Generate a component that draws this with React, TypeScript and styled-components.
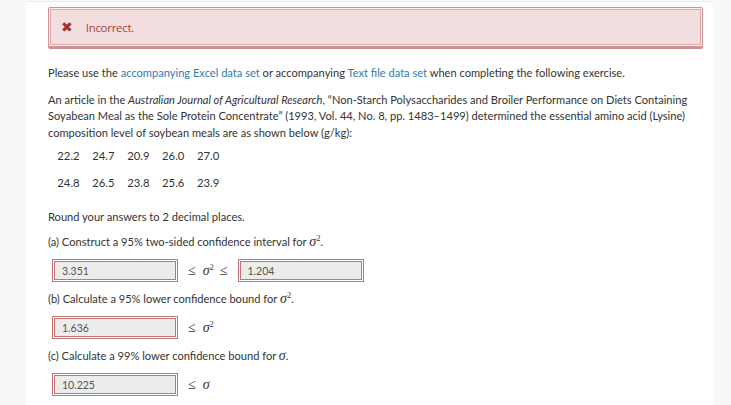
import React from "react";
import styled, { createGlobalStyle } from "styled-components";

const Global = createGlobalStyle`
  html, body { margin: 0; padding: 0; background: #f8f8f8; }
  body { font-family: Lato, "Open Sans", sans-serif; color: #333; }
`;

const Page = styled.div`
  width: 731px;
  height: 405px;
  overflow: hidden;
  padding-top: 1px;
  box-sizing: border-box;
`;

const Panel = styled.div`
  margin-left: 27px;
  width: 686px;
  min-height: 420px;
  background: #fff;
  border-top: 1px solid #ececec;
  box-sizing: border-box;
  padding: 5px 10px 0 21px;
`;

const Alert = styled.div`
  display: flex;
  align-items: center;
  gap: 13px;
  height: 42px;
  box-sizing: border-box;
  padding: 0 0 0 12px;
  background: #f2dede;
  border: 1px solid #cf9294;
  border-bottom-width: 3px;
  border-radius: 2px;
  box-shadow: inset 0 0 0 1px #fbeeee, inset 0 0 0 2px #d9a9ab;
`;

const XMark = styled.span`
  font-family: "DejaVu Sans", sans-serif;
  font-size: 14px;
  font-weight: bold;
  color: #a3312f;
  line-height: 1;
`;

const AlertText = styled.span`
  font-family: "Open Sans", sans-serif;
  font-size: 11.5px;
  color: #a94442;
  letter-spacing: -0.3px;
`;

const Content = styled.div`
  width: 650px;
  padding-top: 15.75px;
  font-size: 11.1px;
  line-height: 16.5px;
`;

const P = styled.p<{ $gap?: number }>`
  margin: 0 0 ${(p) => (p.$gap ?? 8.5)}px;
`;

const Link = styled.span`
  color: #2f7bb5;
`;

const DataTable = styled.table`
  border-collapse: collapse;
  margin: 1px 0 13px 3px;
`;

const Cell = styled.td`
  padding: 5.25px 6.3px;
  font-size: 11.3px;
  line-height: 16.5px;
`;

const AnswerRow = styled.div`
  display: flex;
  align-items: center;
  gap: 10px;
  margin: 0 0 9px 4px;
`;

const AnswerBox = styled.div`
  width: 126px;
  height: 23px;
  flex: none;
  box-sizing: border-box;
  border: 3px double #c67577;
  background: #ececec;
  background-clip: padding-box;
  display: flex;
  align-items: center;
  padding-left: 7px;
  font-size: 10.5px;
  color: #555;
`;

const Math = styled.span`
  font-family: "Liberation Serif", serif;
  font-size: 14px;
  color: #333;
  white-space: nowrap;
`;

const Rel = styled.span<{ $after?: boolean }>`
  margin: ${(p) => (p.$after ? "0 0 0 6px" : "0 7px 0 0")};
`;

const Sym = styled.span`
  font-style: italic;
`;

const Sup = styled.sup`
  font-size: 8.5px;
  vertical-align: 5px;
  line-height: 0;
`;

const SigmaSq = () => (
  <Math>
    <Sym>σ</Sym>
    <Sup>2</Sup>
  </Math>
);

const data = [
  ["22.2", "24.7", "20.9", "26.0", "27.0"],
  ["24.8", "26.5", "23.8", "25.6", "23.9"],
];

export default function App() {
  return (
    <>
      <Global />
      <Page>
        <Panel>
          <Alert>
            <XMark>✖</XMark>
            <AlertText>Incorrect.</AlertText>
          </Alert>
          <Content>
            <P $gap={10.5}>
              Please use the <Link>accompanying Excel data set</Link> or accompanying{" "}
              <Link>Text file data set</Link> when completing the following exercise.
            </P>
            <P $gap={0}>
              An article in the <i>Australian Journal of Agricultural Research</i>, “Non-Starch
              Polysaccharides and Broiler Performance on Diets Containing Soyabean Meal as the Sole
              Protein Concentrate” (1993, Vol. 44, No. 8, pp. 1483–1499) determined the essential
              amino acid (Lysine) composition level of soybean meals are as shown below (g/kg):
            </P>
            <DataTable>
              <tbody>
                {data.map((row, i) => (
                  <tr key={i}>
                    {row.map((v, j) => (
                      <Cell key={j}>{v}</Cell>
                    ))}
                  </tr>
                ))}
              </tbody>
            </DataTable>
            <P>Round your answers to 2 decimal places.</P>
            <P>
              (a) Construct a 95% two-sided confidence interval for <SigmaSq />.
            </P>
            <AnswerRow>
              <AnswerBox>3.351</AnswerBox>
              <Math>
                <Rel>≤</Rel>
                <Sym>σ</Sym>
                <Sup>2</Sup>
                <Rel $after>≤</Rel>
              </Math>
              <AnswerBox>1.204</AnswerBox>
            </AnswerRow>
            <P>
              (b) Calculate a 95% lower confidence bound for <SigmaSq />.
            </P>
            <AnswerRow>
              <AnswerBox>1.636</AnswerBox>
              <Math>
                <Rel>≤</Rel>
                <Sym>σ</Sym>
                <Sup>2</Sup>
              </Math>
            </AnswerRow>
            <P>
              (c) Calculate a 99% lower confidence bound for <Math><Sym>σ</Sym></Math>.
            </P>
            <AnswerRow>
              <AnswerBox>10.225</AnswerBox>
              <Math>
                <Rel>≤</Rel>
                <Sym>σ</Sym>
              </Math>
            </AnswerRow>
          </Content>
        </Panel>
      </Page>
    </>
  );
}
